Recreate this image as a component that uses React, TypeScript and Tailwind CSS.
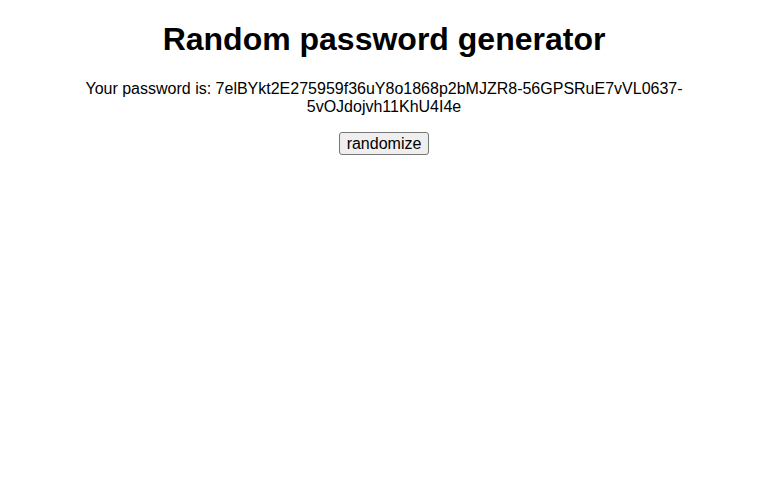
import React, { useState } from "react";

export default function App() {
  const [pw] = useState("7elBYkt2E275959f36uY8o1868p2bMJZR8-56GPSRuE7vVL0637-5vOJdojvh11KhU4I4e");
  return (
    <div className="bg-white text-black text-center min-h-[480px] pt-[21px]" style={{ fontFamily: '"Liberation Sans", Arial, sans-serif' }}>
      <div className="max-w-[614px] mx-auto">
        <h1 className="text-[32px] leading-[37px] font-bold">Random password generator</h1>
        <p className="mt-[22px] text-[16px] leading-[18px]">Your password is: {pw}</p>
        <div className="mt-[16px]">
          <button className="text-[16px] leading-[19px] px-[7px] py-[1px] border border-[#767676] rounded-[3px] bg-[#efefef] text-black">
            randomize
          </button>
        </div>
      </div>
    </div>
  );
}
